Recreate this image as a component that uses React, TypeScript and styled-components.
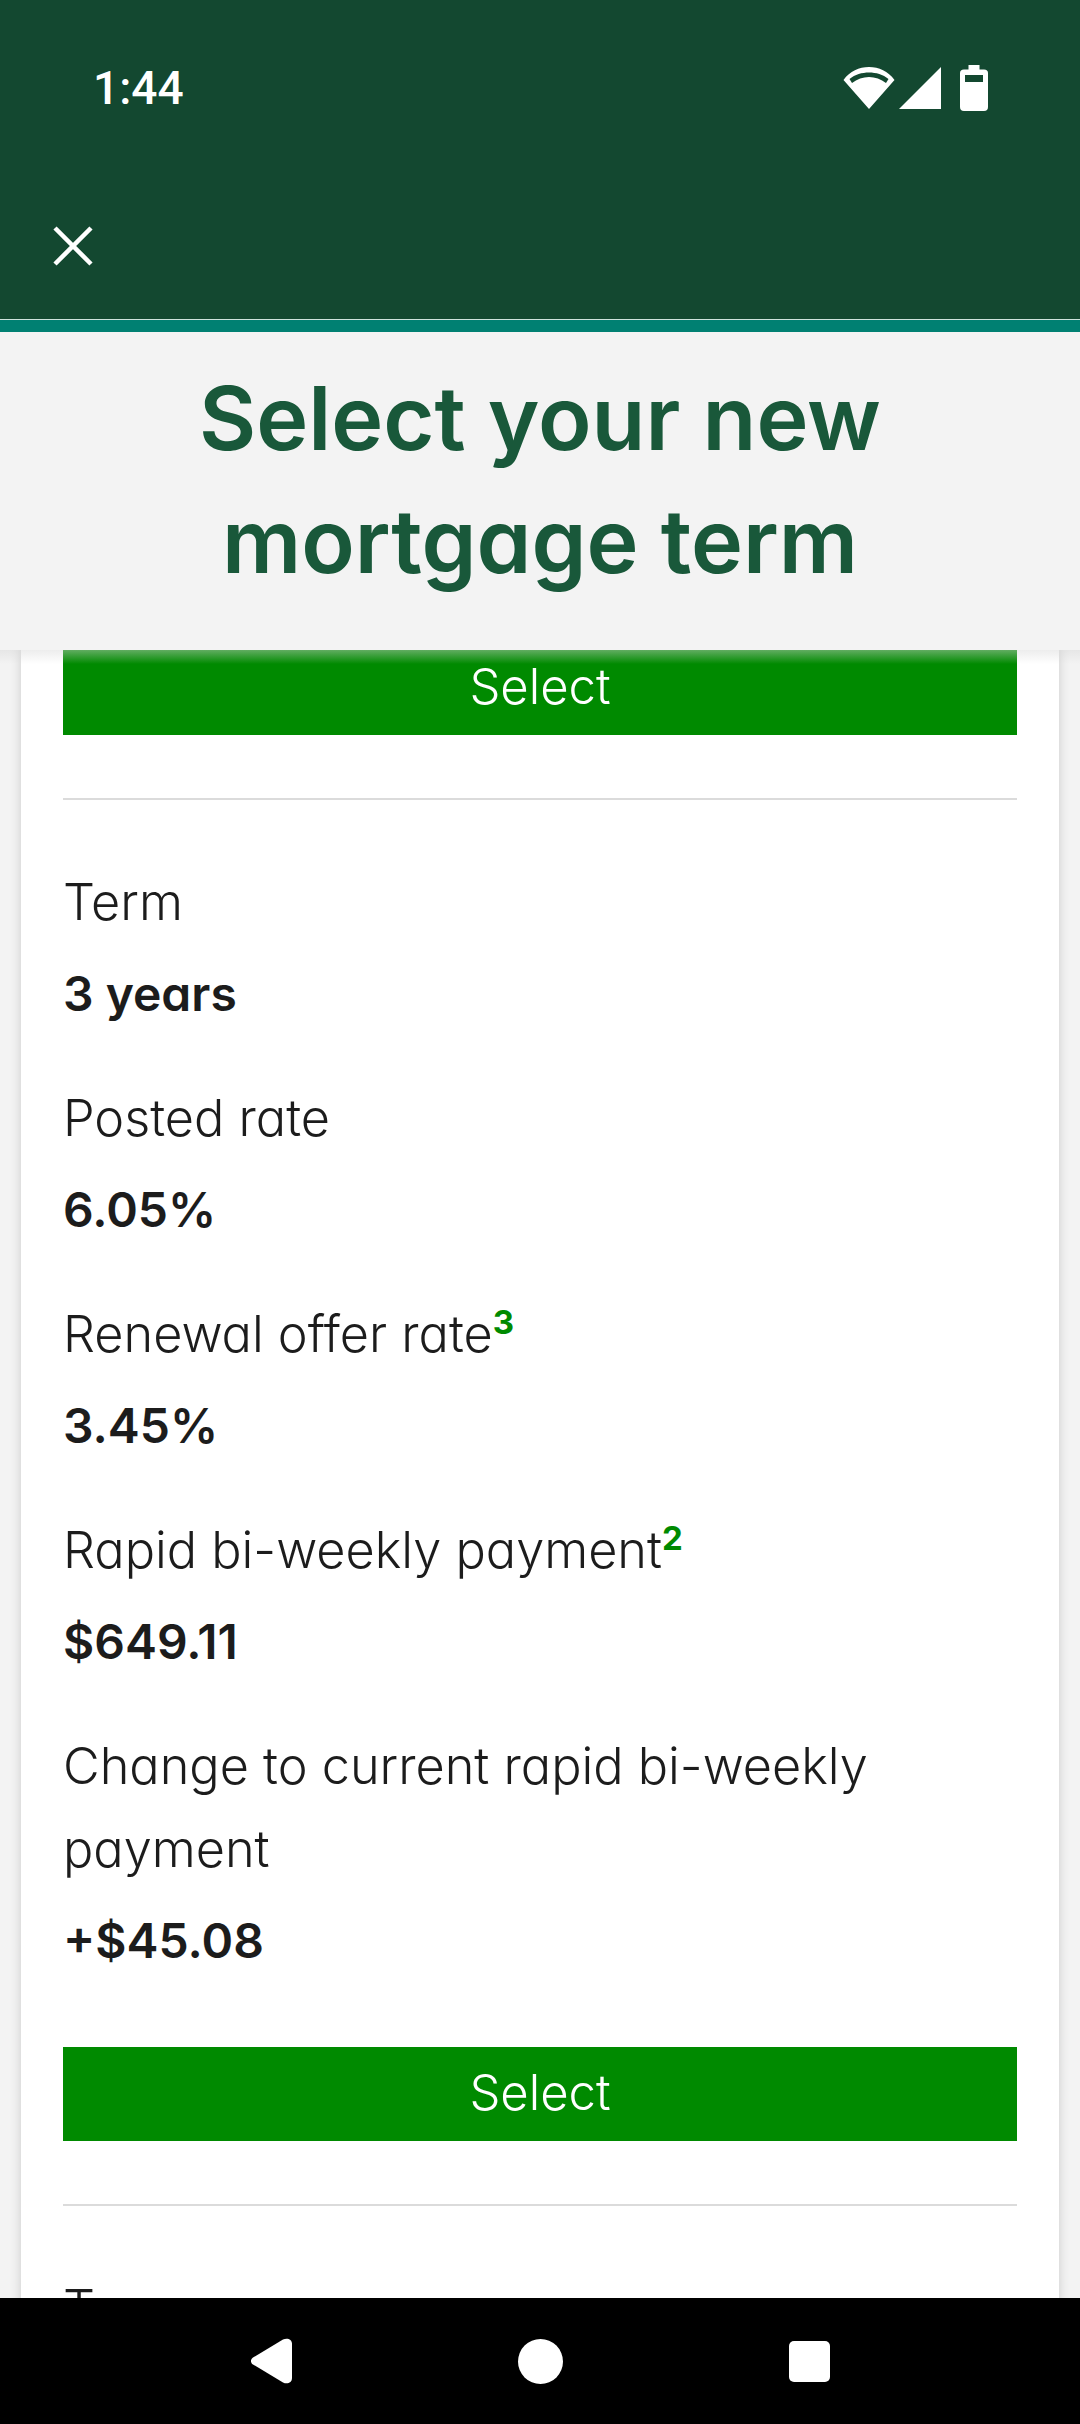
import { FC } from 'react';
import styled, { createGlobalStyle } from 'styled-components';

const GlobalStyle = createGlobalStyle`
  html, body {
    margin: 0;
    padding: 0;
    background: #f3f3f3;
  }
`;

const Screen = styled.div`
  width: 1080px;
  height: 2424px;
  display: flex;
  flex-direction: column;
  overflow: hidden;
  font-family: Inter, 'Liberation Sans', sans-serif;
  font-feature-settings: 'cv11' 1;
  background: #f3f3f3;
`;

const Header = styled.header`
  flex: none;
  background: #134830;
  border-bottom: 1px solid #cfe3dc;
`;

const StatusBar = styled.div`
  height: 176px;
  display: flex;
  align-items: center;
  justify-content: space-between;
  padding: 0 92px 0 93px;
`;

const Clock = styled.span`
  font-family: Roboto, sans-serif;
  font-weight: 500;
  font-size: 46px;
  color: #fff;
`;

const StatusIcons = styled.div`
  display: flex;
  align-items: center;
  gap: 3px;
`;

const Toolbar = styled.div`
  height: 143px;
  display: flex;
  align-items: flex-start;
  padding: 50px 0 0 53px;
  box-sizing: border-box;
`;

const TealBar = styled.div`
  flex: none;
  height: 12px;
  background: #008072;
`;

const TitlePanel = styled.div`
  flex: none;
  position: relative;
  z-index: 2;
  height: 318px;
  box-sizing: border-box;
  padding-top: 25px;
  background: #f3f3f3;

  &::after {
    content: '';
    position: absolute;
    left: 0;
    right: 0;
    top: 100%;
    height: 14px;
    background: linear-gradient(rgba(215, 215, 215, 0.45), rgba(215, 215, 215, 0));
  }
`;

const Title = styled.h1`
  margin: 0;
  text-align: center;
  font-size: 88px;
  font-weight: 600;
  line-height: 123px;
  color: #19583a;
`;

const Scroller = styled.main`
  flex: 1;
  min-height: 0;
  overflow: hidden;
  padding: 0 21px;
`;

const Card = styled.section`
  background: #fff;
  padding: 0 42px;
  margin-top: -9px;
  box-shadow: 0 0 10px rgba(0, 0, 0, 0.16);
  height: 2000px;
`;

const SelectButton = styled.button`
  display: block;
  width: 100%;
  height: 94px;
  border: 0;
  padding: 0 0 3px;
  background: #008a00;
  color: #fff;
  font-family: inherit;
  font-feature-settings: inherit;
  font-size: 49px;
  font-weight: 300;
`;

const Divider = styled.hr`
  margin: 63px 0 60px;
  border: 0;
  height: 2px;
  background: #dbdbdb;
`;

const Row = styled.div`
  margin-bottom: 41px;
`;

const Label = styled.div`
  font-size: 50.4px;
  font-weight: 300;
  line-height: 83px;
  color: #1c1c1c;
`;

const Note = styled.sup`
  font-size: 33px;
  font-weight: 700;
  line-height: 0;
  color: #008a00;
  vertical-align: 18px;
`;

const Value = styled.div`
  margin-top: 9px;
  font-size: 48px;
  font-weight: 600;
  line-height: 83px;
  color: #1c1c1c;
`;

const Actions = styled.div`
  margin-top: 65px;
`;

const NavBar = styled.nav`
  flex: none;
  position: relative;
  z-index: 3;
  height: 126px;
  background: #000;
  display: flex;
  align-items: center;
  justify-content: center;
  gap: 226px;
`;

const BatteryWrap = styled.span`
  display: flex;
  margin-left: 15px;
`;

const terms = [
  { label: 'Term', value: '3 years' },
  { label: 'Posted rate', value: '6.05%' },
  { label: 'Renewal offer rate', note: '3', value: '3.45%' },
  { label: 'Rapid bi-weekly payment', note: '2', value: '$649.11' },
  { label: 'Change to current rapid bi-weekly payment', value: '+$45.08' },
];

const WifiIcon: FC = () => (
  <svg width="52" height="44" viewBox="0 0 52 44">
    <path
      fillRule="evenodd"
      fill="#fff"
      d="M26 43 L0.5 14 C7 5 16 1 26 1 C36 1 45 5 51.5 14 Z M26 11 C20 11 14 13 9 17 L6.5 13 C12 8.5 19 6.5 26 6.5 C33 6.5 40 8.5 45.5 13 L43 17 C38 13 32 11 26 11 Z"
    />
  </svg>
);

const SignalIcon: FC = () => (
  <svg width="44" height="44" viewBox="0 0 44 44">
    <path fill="#fff" d="M43 1 V43 H1 Z" />
  </svg>
);

const BatteryIcon: FC = () => (
  <BatteryWrap>
    <svg width="28" height="46" viewBox="0 0 28 46">
      <path
        fillRule="evenodd"
        fill="#fff"
        d="M8.5 0 H19.5 V4.5 H24 Q28 4.5 28 8 V42 Q28 46 24 46 H4 Q0 46 0 42 V8 Q0 4.5 4 4.5 H8.5 Z M5 10 V17 H23 V10 Z"
      />
    </svg>
  </BatteryWrap>
);

const CloseIcon: FC = () => (
  <svg width="40" height="40" viewBox="0 0 40 40">
    <path stroke="#fff" strokeWidth="4.5" fill="none" d="M2 2 L38 38 M38 2 L2 38" />
  </svg>
);

const BackIcon: FC = () => (
  <svg width="41" height="46" viewBox="0 0 41 46">
    <path
      fill="#fff"
      d="M2 19.5 L32 1.5 C36 -0.5 41 1 41 6 V40 C41 45 36 46.5 32 44.5 L2 26.5 C-0.7 24.5 -0.7 21.5 2 19.5 Z"
    />
  </svg>
);

const HomeIcon: FC = () => (
  <svg width="45" height="45" viewBox="0 0 45 45">
    <circle cx="22.5" cy="22.5" r="22.5" fill="#fff" />
  </svg>
);

const RecentIcon: FC = () => (
  <svg width="41" height="41" viewBox="0 0 41 41">
    <rect width="41" height="41" rx="5" fill="#fff" />
  </svg>
);

export default function App() {
  return (
    <Screen>
      <GlobalStyle />
      <Header>
        <StatusBar>
          <Clock>1:44</Clock>
          <StatusIcons>
            <WifiIcon />
            <SignalIcon />
            <BatteryIcon />
          </StatusIcons>
        </StatusBar>
        <Toolbar>
          <CloseIcon />
        </Toolbar>
      </Header>
      <TealBar />
      <TitlePanel>
        <Title>
          Select your new
          <br />
          mortgage term
        </Title>
      </TitlePanel>
      <Scroller>
        <Card>
          <SelectButton>Select</SelectButton>
          <Divider />
          {terms.map(t => (
            <Row key={t.label}>
              <Label>
                {t.label}
                {t.note && <Note>{t.note}</Note>}
              </Label>
              <Value>{t.value}</Value>
            </Row>
          ))}
          <Actions>
            <SelectButton>Select</SelectButton>
          </Actions>
          <Divider />
          <Label>Term</Label>
        </Card>
      </Scroller>
      <NavBar>
        <BackIcon />
        <HomeIcon />
        <RecentIcon />
      </NavBar>
    </Screen>
  );
}
